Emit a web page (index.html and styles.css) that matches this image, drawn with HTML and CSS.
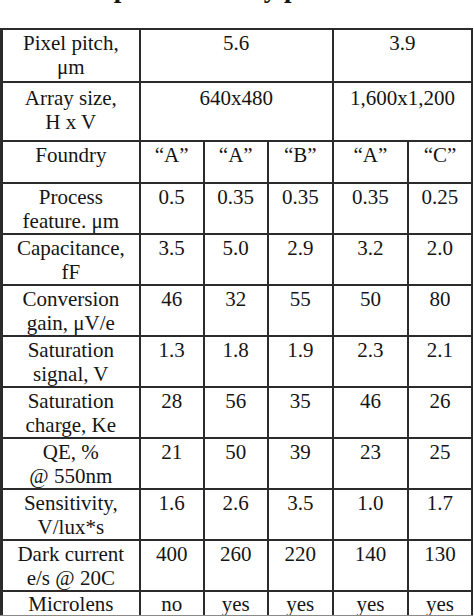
FILE: index.html
```html
<!DOCTYPE html>
<html>
<head>
<meta charset="utf-8">
<link rel="stylesheet" href="styles.css">
</head>
<body>
<div class="caption">Comparison of key parameters</div>
<table class="params">
  <colgroup>
    <col class="c-label">
    <col class="c-a">
    <col class="c-b">
    <col class="c-c">
    <col class="c-d">
    <col class="c-e">
  </colgroup>
  <tr class="r-pitch">
    <td>Pixel pitch,<br>μm</td>
    <td colspan="3">5.6</td>
    <td colspan="2">3.9</td>
  </tr>
  <tr class="r-array">
    <td>Array size,<br>H x V</td>
    <td colspan="3">640x480</td>
    <td colspan="2">1,600x1,200</td>
  </tr>
  <tr class="r-foundry">
    <td>Foundry</td>
    <td>“A”</td><td>“A”</td><td>“B”</td><td>“A”</td><td>“C”</td>
  </tr>
  <tr>
    <td>Process<br>feature. μm</td>
    <td>0.5</td><td>0.35</td><td>0.35</td><td>0.35</td><td>0.25</td>
  </tr>
  <tr>
    <td>Capacitance,<br>fF</td>
    <td>3.5</td><td>5.0</td><td>2.9</td><td>3.2</td><td>2.0</td>
  </tr>
  <tr>
    <td>Conversion<br>gain, μV/e</td>
    <td>46</td><td>32</td><td>55</td><td>50</td><td>80</td>
  </tr>
  <tr>
    <td>Saturation<br>signal, V</td>
    <td>1.3</td><td>1.8</td><td>1.9</td><td>2.3</td><td>2.1</td>
  </tr>
  <tr>
    <td>Saturation<br>charge, Ke</td>
    <td>28</td><td>56</td><td>35</td><td>46</td><td>26</td>
  </tr>
  <tr>
    <td>QE, %<br>@ 550nm</td>
    <td>21</td><td>50</td><td>39</td><td>23</td><td>25</td>
  </tr>
  <tr>
    <td>Sensitivity,<br>V/lux*s</td>
    <td>1.6</td><td>2.6</td><td>3.5</td><td>1.0</td><td>1.7</td>
  </tr>
  <tr>
    <td>Dark current<br>e/s @ 20C</td>
    <td>400</td><td>260</td><td>220</td><td>140</td><td>130</td>
  </tr>
  <tr class="r-last">
    <td>Microlens</td>
    <td>no</td><td>yes</td><td>yes</td><td>yes</td><td>yes</td>
  </tr>
</table>
</body>
</html>
```
FILE: styles.css
```css
html, body {
  margin: 0;
  padding: 0;
  background: #fff;
  overflow: hidden;
}
body {
  width: 474px;
  height: 616px;
  font-family: "Liberation Serif", "Times New Roman", serif;
  color: #151515;
}
.caption {
  margin-top: -27px;
  height: 55px;
  font-size: 27px;
  line-height: 30px;
  font-weight: bold;
  text-align: center;
  padding-left: 0;
}
.params {
  border-collapse: collapse;
  table-layout: fixed;
  width: 473px;
  font-size: 21px;
  line-height: 24px;
  border-left: 3px solid #2b2b2b;
}
.params col.c-label { width: 138px; }
.params col.c-a { width: 64px; }
.params col.c-b { width: 64px; }
.params col.c-c { width: 65px; }
.params col.c-d { width: 75px; }
.params col.c-e { width: 64px; }
.params td {
  border: 2px solid #2b2b2b;
  padding: 1px 0 0;
  text-align: center;
  vertical-align: top;
  white-space: nowrap;
  overflow: hidden;
}
.params td:first-child {
  border-left: 3px solid #2b2b2b;
}
.params tr.r-pitch td { height: 50px; }
.params tr.r-array td { height: 54px; padding-top: 3px; }
.params tr.r-foundry td { height: 39px; }
.params tr.r-last td { height: 19px; line-height: 22px; border-bottom: 4px solid #8a8a8a; }
```
